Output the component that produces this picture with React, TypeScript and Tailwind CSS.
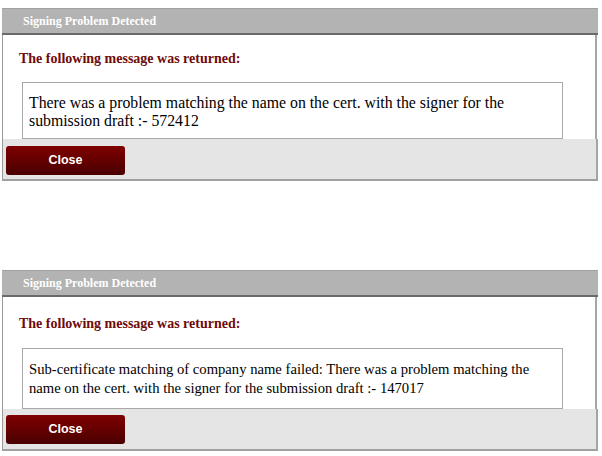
import React from "react";

function Panel({ msg, textClass, boxH, titleTop, boxTop, btnTop }: { msg: string; textClass: string; boxH: string; titleTop: string; boxTop: string; btnTop: string }) {
  return (
    <div className="ml-[2px] w-[596px]">
      <div className="h-[27px] bg-[#b3b3b3] border-t border-[#a0a0a0] border-b-2 border-b-[#6a6a6a] flex items-center pl-[21px]">
        <span className="text-white font-bold text-[12px] [font-family:'Liberation_Serif',serif]">Signing Problem Detected</span>
      </div>
      <div className="bg-white border-l border-[#9a9a9a] border-r-2 border-r-[#a5a5a5] mr-[1px]">
        <div className={`${titleTop} pl-[16px] text-[#6e0b0b] font-bold text-[14px] leading-[16px] [font-family:'Liberation_Serif',serif]`}>
          The following message was returned:
        </div>
        <div className={`${boxTop} ml-[19px] w-[541px] ${boxH} border border-[#a8a8a8] px-[6px] pt-[11px] text-black ${textClass} [font-family:'Liberation_Serif',serif]`}>
          {msg}
        </div>
      </div>
      <div className={`h-[42px] bg-[#e6e5e6] border-l border-[#9a9a9a] border-r-2 border-r-[#a5a5a5] border-b-2 border-b-[#a0a0a0] ${btnTop} pl-[3px]`}>
        <button className="w-[119px] h-[29px] rounded-[3px] bg-gradient-to-b from-[#800000] to-[#4a0000] text-white font-bold text-[12.5px] [font-family:'Liberation_Sans',Arial,sans-serif]">
          Close
        </button>
      </div>
    </div>
  );
}

export default function App() {
  return (
    <div className="w-[602px] h-[456px] bg-white pt-[8px]">
      <Panel
        msg="There was a problem matching the name on the cert. with the signer for the submission draft :- 572412"
        textClass="text-[15.8px] leading-[18px]"
        boxH="h-[57px]"
        titleTop="pt-[16px]"
        boxTop="mt-[15px]"
        btnTop="pt-[7px]"
      />
      <div className="h-[89px]" />
      <Panel
        msg="Sub-certificate matching of company name failed: There was a problem matching the name on the cert. with the signer for the submission draft :- 147017"
        textClass="text-[14.65px] leading-[19px]"
        boxH="h-[61px]"
        titleTop="pt-[19px]"
        boxTop="mt-[16px]"
        btnTop="pt-[6px]"
      />
    </div>
  );
}
